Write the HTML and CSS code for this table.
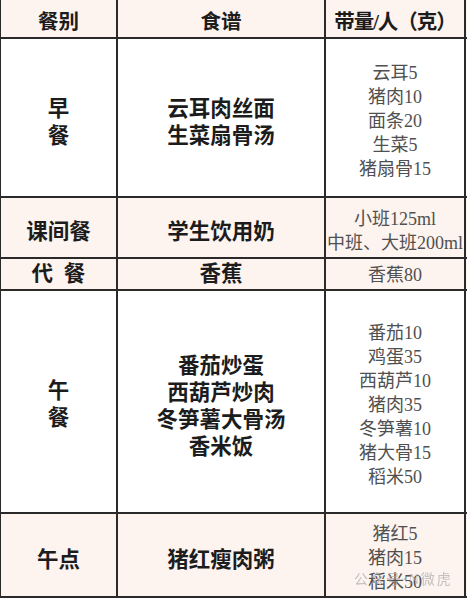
FILE: index.html
```html
<!DOCTYPE html>
<html lang="zh-CN">
<head>
<meta charset="utf-8">
<title>食谱</title>
<link rel="stylesheet" href="styles.css">
</head>
<body>
<div class="table">
  <div class="row head pink">
    <div class="cell c1 bold"><p>餐别</p></div>
    <div class="cell c2 bold"><p>食谱</p></div>
    <div class="cell c3 bold hdr"><p>带量/人（克）</p></div>
  </div>
  <div class="row r1">
    <div class="cell c1 bold"><p>早<br>餐</p></div>
    <div class="cell c2 bold"><p>云耳肉丝面<br>生菜扇骨汤</p></div>
    <div class="cell c3 amt"><p>云耳5<br>猪肉10<br>面条20<br>生菜5<br>猪扇骨15</p></div>
  </div>
  <div class="row r2 pink">
    <div class="cell c1 bold"><p>课间餐</p></div>
    <div class="cell c2 bold"><p>学生饮用奶</p></div>
    <div class="cell c3 amt"><p>小班125ml<br>中班、大班200ml</p></div>
  </div>
  <div class="row r3 pink">
    <div class="cell c1 bold"><p>代&ensp;餐</p></div>
    <div class="cell c2 bold"><p>香蕉</p></div>
    <div class="cell c3 amt"><p>香蕉80</p></div>
  </div>
  <div class="row r4">
    <div class="cell c1 bold"><p>午<br>餐</p></div>
    <div class="cell c2 bold"><p>番茄炒蛋<br>西葫芦炒肉<br>冬笋薯大骨汤<br>香米饭</p></div>
    <div class="cell c3 amt"><p>番茄10<br>鸡蛋35<br>西葫芦10<br>猪肉35<br>冬笋薯10<br>猪大骨15<br>稻米50</p></div>
  </div>
  <div class="row r5 pink">
    <div class="cell c1 bold"><p>午点</p></div>
    <div class="cell c2 bold"><p>猪红瘦肉粥</p></div>
    <div class="cell c3 amt wm-host"><p>猪红5<br>猪肉15<br>稻米50</p><span class="watermark">公众号·N微虎</span></div>
  </div>
</div>
</body>
</html>
```

FILE: styles.css
```css
html, body {
  margin: 0;
  padding: 0;
  background: #ffffff;
}
body {
  width: 468px;
  height: 600px;
  overflow: hidden;
  font-family: "Liberation Serif", "Noto Sans CJK SC", serif;
  color: #1e1e1e;
}
p { margin: 0; }
.table {
  width: 466px;
  border-left: 1px solid #2a2a2a;
  display: flex;
  flex-direction: column;
}
.row {
  display: grid;
  grid-template-columns: 117px 208px 140px;
  border-bottom: 2px solid #2a2a2a;
  box-sizing: border-box;
}
.pink { background: #fdf3ef; }
.head { height: 39px; }
.r1 { height: 159px; }
.r2 { height: 61px; }
.r3 { height: 32px; }
.r4 { height: 223px; }
.r5 { height: 84px; }
.cell {
  border-right: 2px solid #2a2a2a;
  display: flex;
  flex-direction: column;
  align-items: center;
  justify-content: center;
  text-align: center;
  white-space: nowrap;
}
.bold {
  font-family: "Liberation Serif", "Noto Sans CJK SC", serif;
  font-weight: 700;
  font-size: 21.5px;
  line-height: 27px;
  color: #1c1c1c;
  padding-top: 10px;
}
.head .bold { font-size: 20.5px; padding-top: 8px; }
.r3 .bold { padding-top: 0; line-height: 24px; }
.r4 .c1 { padding-top: 6px; }
.hdr { letter-spacing: -1px; }
.amt {
  font-family: "Liberation Serif", "Noto Sans CJK SC", serif;
  font-size: 18px;
  line-height: 24px;
  color: #505050;
  padding-top: 6px;
}
.r3 .amt { padding-top: 2px; }
.wm-host { position: relative; }
.watermark {
  position: absolute;
  left: 28px;
  bottom: 8px;
  font-family: "Liberation Serif", "Noto Sans CJK SC", serif;
  font-size: 14px;
  line-height: 16px;
  letter-spacing: 2px;
  color: rgba(170, 170, 170, 0.7);
  filter: blur(0.6px);
}
```
